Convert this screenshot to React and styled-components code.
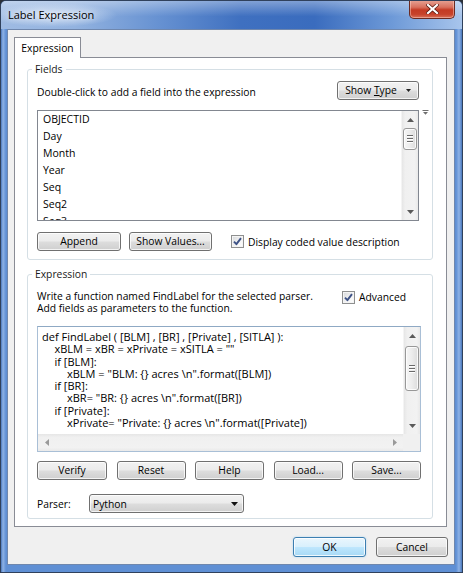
import React from "react";
import styled, { createGlobalStyle } from "styled-components";

const Global = createGlobalStyle`
  html, body { margin: 0; padding: 0; background: #2b3038; }
  body { font-family: "Open Sans", "Noto Sans", sans-serif; font-size: 10.3px; color: #000; }
  #root { width: 463px; height: 573px; }
  * { box-sizing: border-box; }
`;

const Window = styled.div`
  width: 463px;
  height: 573px;
  display: flex;
  flex-direction: column;
  border: 1px solid #30415c;
  border-radius: 6px 6px 0 0;
  overflow: hidden;
  background: linear-gradient(90deg, #4a78bd 0, #8fb3e6 2px, #5f8fd4 5px, #5f8fd4 calc(100% - 6px), #8fb3e6 calc(100% - 3px), #4a78bd 100%);
`;

const TitleBar = styled.div`
  height: 28px;
  flex: none;
  display: flex;
  align-items: flex-start;
  justify-content: space-between;
  padding: 0 7px;
  background:
    radial-gradient(ellipse 64px 12px at 52px 14px, rgba(222,233,248,0.95), rgba(222,233,248,0)),
    linear-gradient(180deg, rgba(255,255,255,0.35), rgba(255,255,255,0) 55%),
    linear-gradient(90deg, #9fbbe3 0%, #93b3e0 16%, #6792d2 34%, #3f70c0 52%, #3a6cbe 68%, #6e9ad8 85%, #a8c5ec 100%);
`;

const TitleText = styled.div`
  margin-top: 7px;
  font-size: 11px;
  line-height: 14px;
  color: #000;
  text-shadow: 0 0 6px rgba(255,255,255,0.9);
`;

const CloseButton = styled.div`
  width: 46px;
  height: 19px;
  margin-top: -1px;
  display: flex;
  align-items: center;
  justify-content: center;
  border: 1px solid #6b2a22;
  border-top: none;
  border-radius: 0 0 5px 5px;
  background: linear-gradient(180deg, #e7a597 0%, #d8705e 40%, #c43a24 55%, #c7432c 80%, #d9715a 100%);
  box-shadow: inset 0 0 0 1px rgba(255,220,210,0.45);
`;

const Client = styled.div`
  flex: 1;
  margin: 0 7px 7px 6px;
  border: 1px solid #6f87ad;
  background: #f0f0f0;
  display: flex;
  flex-direction: column;
  padding: 7px 6px 7px 6px;
`;

const TabStrip = styled.div`
  display: flex;
  height: 20px;
`;

const Tab = styled.div`
  position: relative;
  z-index: 1;
  width: 67px;
  height: 21px;
  margin-bottom: -1px;
  border: 1px solid #898c95;
  border-bottom: none;
  background: #fff;
  display: flex;
  align-items: center;
  justify-content: center;
  padding-bottom: 1px;
`;

const TabPanel = styled.div`
  height: 470px;
  margin-right: 1px;
  border: 1px solid #898c95;
  background: #fff;
  padding: 5px 13px 0 12px;
  display: flex;
  flex-direction: column;
`;

const Group = styled.fieldset`
  margin: ${(p) => p.$mt || 0}px 0 0 0;
  padding: 5px 11px ${(p) => p.$pb}px 9px;
  border: 1px solid #d5dfe5;
  border-radius: 3px;
  min-width: 0;
  display: flex;
  flex-direction: column;
`;

const Legend = styled.legend`
  margin-left: -5px;
  padding: 0 3px;
  font-size: 10.3px;
  line-height: 13px;
  color: #1a1a1a;
`;

const Row = styled.div`
  display: flex;
  align-items: center;
  height: ${(p) => p.$h || 19}px;
  margin-top: ${(p) => p.$mt || 0}px;
  justify-content: ${(p) => p.$jc || "flex-start"};
`;

const Hint = styled.div`
  flex: 1;
  line-height: 14px;
  padding-top: 2px;
`;

const btnGray = `
  border: 1px solid #707070;
  background: linear-gradient(180deg, #f2f2f2 0%, #ebebeb 48%, #dddddd 52%, #cfcfcf 100%);
  box-shadow: inset 0 0 0 1px rgba(255,255,255,0.75);
`;

const btnDefault = `
  border: 1px solid #3c7fb1;
  background: linear-gradient(180deg, #eaf6fd 0%, #d9f0fc 48%, #bee6fd 52%, #a7d9f5 100%);
  box-shadow: inset 0 0 0 1px rgba(255,255,255,0.8), 0 0 2px rgba(120,190,240,0.6);
`;

const Button = styled.button`
  width: ${(p) => p.$w}px;
  height: ${(p) => p.$h || 19}px;
  flex: none;
  border-radius: 3px;
  ${(p) => (p.$default ? btnDefault : btnGray)}
  font-family: "Open Sans", "Noto Sans", sans-serif;
  font-size: 10.3px;
  color: #000;
  padding: 0;
  margin-right: ${(p) => p.$mr || 0}px;
  display: flex;
  align-items: center;
  justify-content: center;
  gap: 9px;
  line-height: 1;
`;

const Underlined = styled.span`
  text-decoration: underline;
  text-underline-offset: 1px;
`;

const ListRow = styled.div`
  display: flex;
  align-items: flex-start;
  margin-top: 10px;
  height: 111px;
`;

const ListBox = styled.div`
  width: 382px;
  height: 111px;
  flex: none;
  border: 1px solid #828790;
  background: #fff;
  display: flex;
`;

const ListItems = styled.div`
  flex: 1;
  overflow: hidden;
`;

const ListItem = styled.div`
  height: 17px;
  line-height: 17px;
  padding-left: 5px;
  font-size: 10.5px;
`;

const OverflowIcon = styled.svg`
  margin: 0 0 0 3px;
  flex: none;
`;

const VScroll = styled.div`
  width: 17px;
  flex: none;
  display: flex;
  flex-direction: column;
  background: linear-gradient(90deg, #e6e6e6 0%, #f0f0f0 20%, #f2f2f2 80%, #e9e9e9 100%);
  border-left: 1px solid #f4f4f4;
`;

const HScroll = styled.div`
  height: 17px;
  display: flex;
  justify-content: space-between;
  background: linear-gradient(180deg, #e6e6e6 0%, #f0f0f0 20%, #f2f2f2 80%, #e9e9e9 100%);
`;

const ArrowBox = styled.div`
  width: 17px;
  height: 17px;
  flex: none;
  display: flex;
  align-items: center;
  justify-content: center;
`;

const Spacer = styled.div`
  flex: 1;
`;

const Thumb = styled.div`
  height: ${(p) => p.$h}px;
  margin: ${(p) => p.$mt || 0}px 1px 0 1px;
  border: 1px solid #989898;
  border-radius: 3px;
  background: linear-gradient(90deg, #f6f6f6 0%, #ececec 50%, #dcdcdc 100%);
  box-shadow: inset 0 0 0 1px rgba(255,255,255,0.8);
  display: flex;
  flex-direction: column;
  align-items: center;
  justify-content: center;
  gap: 1px;
`;

const GripLine = styled.div`
  width: 6px;
  height: 1px;
  background: #6a6a6a;
  box-shadow: 0 1px 0 #fff;
  margin-bottom: 1px;
`;

const Corner = styled.div`
  background: #f0f0f0;
`;

const CheckWrap = styled.label`
  display: flex;
  align-items: center;
  gap: 4px;
  margin-left: ${(p) => p.$ml || 0}px;
  white-space: nowrap;
`;

const CheckBox = styled.span`
  width: 13px;
  height: 13px;
  flex: none;
  border: 1px solid #8e8f8f;
  background: linear-gradient(135deg, #d6d8db 0%, #f4f4f4 60%, #ffffff 100%);
  box-shadow: inset 0 0 0 1px #f4f4f4;
  display: flex;
  align-items: center;
  justify-content: center;
`;

const DescRow = styled.div`
  display: flex;
  align-items: flex-start;
  margin-top: 4px;
`;

const DescText = styled.div`
  width: 305px;
  flex: none;
  line-height: 12px;
`;

const CodeBox = styled.div`
  margin-top: 12px;
  width: 384px;
  height: 126px;
  border: 1px solid #a9bfd6;
  border-top-color: #8fa9c4;
  background: #fff;
  display: grid;
  grid-template-columns: 1fr 17px;
  grid-template-rows: 1fr 17px;
`;

const CodeText = styled.div`
  padding: 4px 0 0 4px;
  overflow: hidden;
  font-size: 11px;
  line-height: 12.3px;
  white-space: pre;
`;

const CodeLine = styled.div`
  padding-left: ${(p) => p.$indent * 12.5}px;
`;

const ParserRow = styled.div`
  display: flex;
  align-items: center;
  height: 19px;
  margin-top: 14px;
`;

const ParserLabel = styled.div`
  width: 52px;
  flex: none;
`;

const Select = styled.div`
  width: 155px;
  height: 19px;
  border-radius: 3px;
  ${btnGray}
  display: flex;
  align-items: center;
  justify-content: space-between;
  padding: 0 5px 0 3px;
`;

const Footer = styled.div`
  margin-top: 10px;
  display: flex;
  justify-content: flex-end;
  gap: 10px;
  height: 20px;
`;

const Tri = ({ dir = "down", w = 7, h = 4, color = "#5a5a5a" }) => {
  if (dir === "left" || dir === "right") {
    const p = dir === "left" ? `${h},0 ${h},${w} 0,${w / 2}` : `0,0 0,${w} ${h},${w / 2}`;
    return (
      <svg width={h} height={w} viewBox={`0 0 ${h} ${w}`}>
        <polygon points={p} fill={color} />
      </svg>
    );
  }
  const p = dir === "down" ? `0,0 ${w},0 ${w / 2},${h}` : `0,${h} ${w},${h} ${w / 2},0`;
  return (
    <svg width={w} height={h} viewBox={`0 0 ${w} ${h}`}>
      <polygon points={p} fill={color} />
    </svg>
  );
};

const Grip = () => (
  <>
    <GripLine />
    <GripLine />
    <GripLine />
  </>
);

const Check = ({ children, ml }) => (
  <CheckWrap $ml={ml}>
    <CheckBox>
      <svg width="9" height="9" viewBox="0 0 9 9">
        <path d="M1 4.6 L3.4 7.2 L8 1.2" fill="none" stroke="#3e5286" strokeWidth="1.9" strokeLinejoin="round" />
      </svg>
    </CheckBox>
    {children}
  </CheckWrap>
);

const fields = ["OBJECTID", "Day", "Month", "Year", "Seq", "Seq2", "Seq3"];

const code = [
  [0, "def FindLabel ( [BLM] , [BR] , [Private] , [SITLA] ):"],
  [1, 'xBLM = xBR = xPrivate = xSITLA = ""'],
  [1, "if [BLM]:"],
  [2, 'xBLM = "BLM: {} acres \\n".format([BLM])'],
  [1, "if [BR]:"],
  [2, 'xBR= "BR: {} acres \\n".format([BR])'],
  [1, "if [Private]:"],
  [2, 'xPrivate= "Private: {} acres \\n".format([Private])'],
];

export default function App() {
  return (
    <>
      <Global />
      <Window>
        <TitleBar>
          <TitleText>Label Expression</TitleText>
          <CloseButton>
            <svg width="13" height="10" viewBox="0 0 13 10">
              <path d="M2 1 L11 9 M11 1 L2 9" stroke="#5a1a12" strokeWidth="3.6" strokeLinecap="square" />
              <path d="M2 1 L11 9 M11 1 L2 9" stroke="#ffffff" strokeWidth="2.2" strokeLinecap="square" />
            </svg>
          </CloseButton>
        </TitleBar>
        <Client>
          <TabStrip>
            <Tab>Expression</Tab>
          </TabStrip>
          <TabPanel>
            <Group $pb={8}>
              <Legend>Fields</Legend>
              <Row $jc="space-between">
                <Hint>Double-click to add a field into the expression</Hint>
                <Button $w={82} $mr={2}>
                  <span>
                    Show <Underlined>T</Underlined>ype
                  </span>
                  <Tri w={5} h={3} color="#222" />
                </Button>
              </Row>
              <ListRow>
                <ListBox>
                  <ListItems>
                    {fields.map((f) => (
                      <ListItem key={f}>{f}</ListItem>
                    ))}
                  </ListItems>
                  <VScroll>
                    <ArrowBox>
                      <Tri dir="up" />
                    </ArrowBox>
                    <Thumb $h={22}>
                      <Grip />
                    </Thumb>
                    <Spacer />
                    <ArrowBox>
                      <Tri dir="down" />
                    </ArrowBox>
                  </VScroll>
                </ListBox>
                <OverflowIcon width="7" height="6" viewBox="0 0 7 6">
                  <rect x="0.5" y="0" width="6" height="1" fill="#6f6f6f" />
                  <polygon points="1,2 6,2 3.5,4.8" fill="#6f6f6f" />
                </OverflowIcon>
              </ListRow>
              <Row $mt={11}>
                <Button $w={84} $mr={8}>Append</Button>
                <Button $w={83}>Show Values...</Button>
                <Check ml={19}>Display coded value description</Check>
              </Row>
            </Group>
            <Group $mt={8} $pb={5}>
              <Legend>Expression</Legend>
              <DescRow>
                <DescText>
                  Write a function named FindLabel for the selected parser.
                  <br />
                  Add fields as parameters to the function.
                </DescText>
                <Check>Advanced</Check>
              </DescRow>
              <CodeBox>
                <CodeText>
                  {code.map(([ind, t], i) => (
                    <CodeLine key={i} $indent={ind}>
                      {t}
                    </CodeLine>
                  ))}
                </CodeText>
                <VScroll>
                  <ArrowBox>
                    <Tri dir="up" />
                  </ArrowBox>
                  <Thumb $h={45} $mt={2}>
                    <Grip />
                  </Thumb>
                  <Spacer />
                  <ArrowBox>
                    <Tri dir="down" />
                  </ArrowBox>
                </VScroll>
                <HScroll>
                  <ArrowBox>
                    <Tri dir="left" color="#9a9a9a" />
                  </ArrowBox>
                  <ArrowBox>
                    <Tri dir="right" color="#9a9a9a" />
                  </ArrowBox>
                </HScroll>
                <Corner />
              </CodeBox>
              <Row $mt={9} $jc="space-between">
                <Button $w={70}>Verify</Button>
                <Button $w={69}>Reset</Button>
                <Button $w={69}>Help</Button>
                <Button $w={69}>Load...</Button>
                <Button $w={69}>Save...</Button>
              </Row>
              <ParserRow>
                <ParserLabel>Parser:</ParserLabel>
                <Select>
                  <span>Python</span>
                  <Tri w={7} h={4} color="#111" />
                </Select>
              </ParserRow>
            </Group>
          </TabPanel>
          <Footer>
            <Button $w={73} $h={20} $default>
              OK
            </Button>
            <Button $w={72} $h={20}>
              Cancel
            </Button>
          </Footer>
        </Client>
      </Window>
    </>
  );
}
